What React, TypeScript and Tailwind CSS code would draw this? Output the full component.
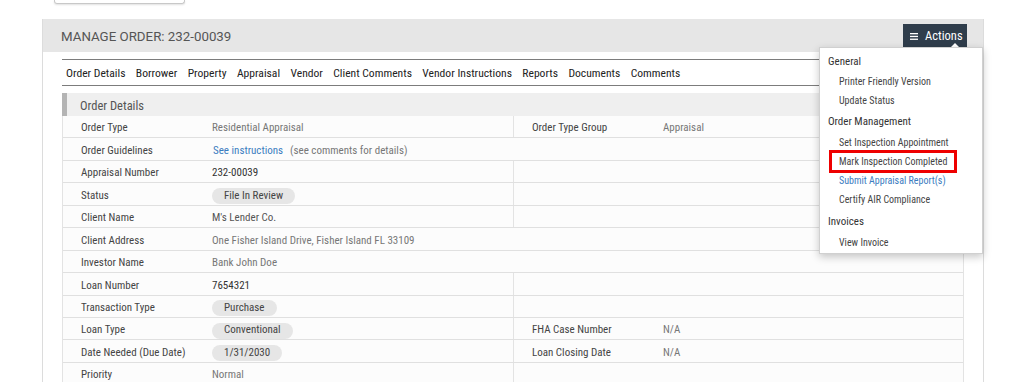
import React from "react";

const C = "font-['Roboto_Condensed','Liberation_Sans_Narrow','DejaVu_Sans_Condensed',Roboto,sans-serif]";

type Cell = { label: string; value?: React.ReactNode };
type Row = { full?: boolean; left: Cell; right?: Cell };

const Pill = ({ children }: { children: React.ReactNode }) => (
  <span className="inline-flex h-[16px] items-center rounded-full bg-[#e6e6e6] px-3 text-[11px] text-[#444]">
    {children}
  </span>
);

const Plain = ({ children }: { children: React.ReactNode }) => (
  <span className="text-[#777]">{children}</span>
);

const Dark = ({ children }: { children: React.ReactNode }) => (
  <span className="text-[#333]">{children}</span>
);

const rows: Row[] = [
  {
    left: { label: "Order Type", value: <Plain>Residential Appraisal</Plain> },
    right: { label: "Order Type Group", value: <Plain>Appraisal</Plain> },
  },
  {
    full: true,
    left: {
      label: "Order Guidelines",
      value: (
        <span>
          <span className="ml-[1px] text-[#3b7cc0]">See instructions</span>
          <span className="ml-[7px] text-[#777]">(see comments for details)</span>
        </span>
      ),
    },
  },
  { left: { label: "Appraisal Number", value: <Dark>232-00039</Dark> }, right: { label: "" } },
  { left: { label: "Status", value: <Pill>File In Review</Pill> }, right: { label: "" } },
  { left: { label: "Client Name", value: <span className="text-[#555]">M's Lender Co.</span> }, right: { label: "" } },
  { full: true, left: { label: "Client Address", value: <Plain>One Fisher Island Drive, Fisher Island FL 33109</Plain> } },
  { full: true, left: { label: "Investor Name", value: <Plain>Bank John Doe</Plain> } },
  { left: { label: "Loan Number", value: <Dark>7654321</Dark> }, right: { label: "" } },
  { left: { label: "Transaction Type", value: <Pill>Purchase</Pill> }, right: { label: "" } },
  {
    left: { label: "Loan Type", value: <Pill>Conventional</Pill> },
    right: { label: "FHA Case Number", value: <Plain>N/A</Plain> },
  },
  {
    left: { label: "Date Needed (Due Date)", value: <Pill>1/31/2030</Pill> },
    right: { label: "Loan Closing Date", value: <Plain>N/A</Plain> },
  },
  { left: { label: "Priority", value: <Plain>Normal</Plain> }, right: { label: "" } },
];

const CellView = ({ cell }: { cell: Cell }) => (
  <div className="flex items-center pl-[18px] pt-[4px]">
    <div className="w-[131px] shrink-0 text-[#444]">{cell.label}</div>
    <div className="flex items-center">{cell.value}</div>
  </div>
);

const tabs = [
  "Order Details",
  "Borrower",
  "Property",
  "Appraisal",
  "Vendor",
  "Client Comments",
  "Vendor Instructions",
  "Reports",
  "Documents",
  "Comments",
];

const MenuHeading = ({ children, className = "" }: { children: React.ReactNode; className?: string }) => (
  <div className={`flex h-[22px] items-center pl-[8px] text-[11px] text-[#333] ${className}`}>{children}</div>
);

const MenuItem = ({ children, className = "" }: { children: React.ReactNode; className?: string }) => (
  <div className={`relative flex h-[19px] items-center pl-[19px] text-[10px] ${className}`}>{children}</div>
);

export default function App() {
  return (
    <div className={`h-[382px] w-[1024px] overflow-hidden bg-white ${C}`}>
      <div className="ml-[54px] h-[4px] w-[131px] rounded-b-[3px] border-x border-b border-[#c8c8c8] shadow-[0_1px_2px_rgba(0,0,0,0.12)]" />
      <div className="ml-[42px] mt-[15px] w-[942px] border-x border-[#dcdcdc]">
        <div className="relative flex h-[33px] items-center justify-between bg-[#e6e6e6] pl-[18px] pr-[16px]">
          <div className="pt-[3px] font-['Roboto',sans-serif] text-[13.3px] text-[#555]">MANAGE ORDER: 232-00039</div>
          <div className="relative">
            <div className="flex h-[23px] w-[64px] items-center gap-[7px] bg-[#2f3d4b] pl-[7px] pt-[2px] text-[12.5px] text-white">
              <svg width="8" height="7" viewBox="0 0 8 7" className="mb-[1px]">
                <rect x="0" y="0" width="8" height="1.3" fill="white" />
                <rect x="0" y="2.8" width="8" height="1.3" fill="white" />
                <rect x="0" y="5.6" width="8" height="1.3" fill="white" />
              </svg>
              <span>Actions</span>
            </div>
            <div className="absolute bottom-0 right-[8px] h-0 w-0 border-x-[4px] border-b-[4px] border-x-transparent border-b-white" />
            <div className="absolute right-[-16px] top-[23px] z-10 w-[164px] border border-[#d0d0d0] bg-white pb-[1px] pt-[2px] shadow-[0_3px_8px_rgba(0,0,0,0.22)]">
              <MenuHeading className="pt-[2px]">General</MenuHeading>
              <MenuItem className="text-[#444]">Printer Friendly Version</MenuItem>
              <MenuItem className="text-[#444]">Update Status</MenuItem>
              <MenuHeading className="mt-[1px] pt-[1px]">Order Management</MenuHeading>
              <MenuItem className="text-[#444]">Set Inspection Appointment</MenuItem>
              <MenuItem className="text-[#444]">
                <div className="absolute left-[9px] top-[-2px] h-[23px] w-[128px] border-[3px] border-[#ee0000]" />
                Mark Inspection Completed
              </MenuItem>
              <MenuItem className="text-[#3b7cc0]">Submit Appraisal Report(s)</MenuItem>
              <MenuItem className="text-[#444]">Certify AIR Compliance</MenuItem>
              <MenuHeading className="mt-[2px]">Invoices</MenuHeading>
              <MenuItem className="h-[18px] pb-[1px] text-[#444]">View Invoice</MenuItem>
            </div>
          </div>
        </div>
        <div className="px-[19px] pt-[7px]">
          <div className="flex h-[27px] items-center gap-[10.4px] border-y border-[#7c7c7c] pl-[4px] pt-[2px] text-[11.6px] text-[#222]">
            {tabs.map((t) => (
              <span key={t}>{t}</span>
            ))}
          </div>
          <div className="mt-[7px] flex h-[23px] items-center border-l-[5px] border-[#b4b4b4] bg-[#efefef] pl-[13px] pt-[3px] text-[12.5px] text-[#555]">
            Order Details
          </div>
          <div className="border-x border-[#e3e3e3] text-[11px]">
            {rows.map((r, i) => (
              <div
                key={i}
                className={`h-[22.45px] border-b border-[#e0e0e0] bg-[#fcfcfc] ${r.full ? "flex" : "grid grid-cols-2"}`}
              >
                <CellView cell={r.left} />
                {!r.full && r.right && (
                  <div className="flex border-l border-[#e3e3e3]">
                    <CellView cell={r.right} />
                  </div>
                )}
              </div>
            ))}
          </div>
        </div>
      </div>
    </div>
  );
}
